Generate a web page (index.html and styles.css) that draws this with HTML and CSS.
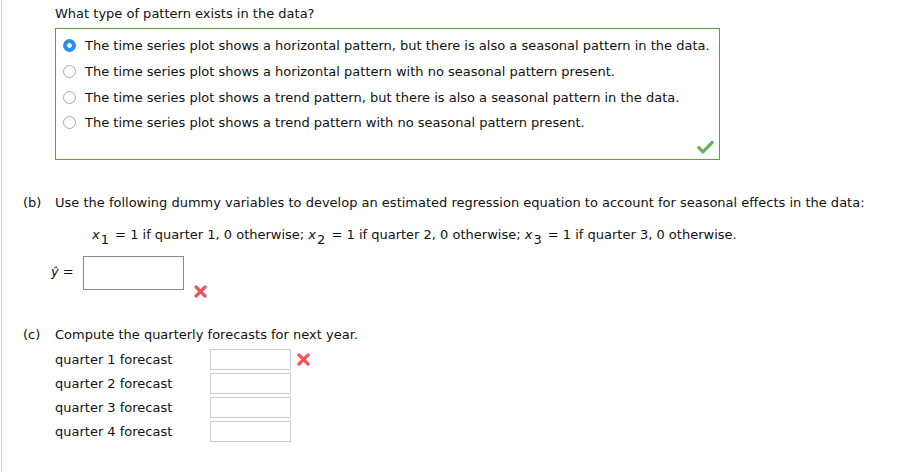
FILE: index.html
```html
<!DOCTYPE html>
<html>
<head>
<meta charset="utf-8">
<link rel="stylesheet" href="styles.css">
</head>
<body>
<div class="page">
  <div class="question">What type of pattern exists in the data?</div>
  <div class="choices">
    <div class="choice"><span class="radio on"></span><span>The time series plot shows a horizontal pattern, but there is also a seasonal pattern in the data.</span></div>
    <div class="choice"><span class="radio"></span><span>The time series plot shows a horizontal pattern with no seasonal pattern present.</span></div>
    <div class="choice"><span class="radio"></span><span>The time series plot shows a trend pattern, but there is also a seasonal pattern in the data.</span></div>
    <div class="choice"><span class="radio"></span><span>The time series plot shows a trend pattern with no seasonal pattern present.</span></div>
    <svg class="check" width="17" height="14" viewBox="0 0 17 14"><path d="M1.8 7.6 L6 11.8 L15.2 2.4" fill="none" stroke="#5cb35c" stroke-width="3.2" stroke-linecap="round" stroke-linejoin="round"/></svg>
  </div>

  <div class="part part-b">
    <span class="label">(b)</span>
    <span>Use the following dummy variables to develop an estimated regression equation to account for seasonal effects in the data:</span>
  </div>
  <div class="dummy"><i>x</i><sub>1</sub> = 1 if quarter 1, 0 otherwise; <i>x</i><sub>2</sub> = 1 if quarter 2, 0 otherwise; <i>x</i><sub>3</sub> = 1 if quarter 3, 0 otherwise.</div>
  <div class="yhat-row">
    <span class="yhat"><i>ŷ</i> =</span>
    <span class="big-input"></span>
    <svg class="cross cross-b" width="13" height="13" viewBox="0 0 13 13"><path d="M2 2 L11 11 M11 2 L2 11" stroke="#f0545e" stroke-width="3.2" stroke-linecap="round"/></svg>
  </div>

  <div class="part part-c">
    <span class="label">(c)</span>
    <span>Compute the quarterly forecasts for next year.</span>
  </div>
  <div class="forecasts">
    <div class="frow"><span class="flabel">quarter 1 forecast</span><span class="small-input"></span><svg class="cross" width="13" height="13" viewBox="0 0 13 13"><path d="M2 2 L11 11 M11 2 L2 11" stroke="#f0545e" stroke-width="3.2" stroke-linecap="round"/></svg></div>
    <div class="frow"><span class="flabel">quarter 2 forecast</span><span class="small-input"></span></div>
    <div class="frow"><span class="flabel">quarter 3 forecast</span><span class="small-input"></span></div>
    <div class="frow"><span class="flabel">quarter 4 forecast</span><span class="small-input"></span></div>
  </div>
</div>
</body>
</html>
```

FILE: styles.css
```css
html, body {
  margin: 0;
  padding: 0;
  background: #fff;
}
body {
  font-family: "DejaVu Sans", Verdana, sans-serif;
  font-size: 13px;
  color: #111;
}
.page {
  margin-left: 1px;
  border-left: 1px solid #d4d4d4;
  min-height: 472px;
  box-sizing: border-box;
  padding-left: 53px;
  padding-top: 6px;
}
.question {
  line-height: 16px;
}
.choices {
  position: relative;
  margin-top: 6px;
  width: 665px;
  height: 132px;
  border: 1px solid #5fa043;
  padding-top: 4px;
  box-sizing: border-box;
}
.choice {
  display: flex;
  align-items: center;
  height: 25.7px;
}
.radio {
  width: 13px;
  height: 13px;
  border: 1px solid #a8a8a8;
  border-radius: 50%;
  margin-left: 7px;
  margin-right: 9px;
  box-sizing: border-box;
  background: #fff;
  flex: none;
}
.radio.on {
  border: none;
  background: radial-gradient(circle, #fff 0 2px, #2d8fe8 2.6px);
}
.check {
  position: absolute;
  right: 5px;
  bottom: 5px;
}
.part {
  display: flex;
  margin-left: -32px;
  line-height: 16px;
}
.part .label {
  width: 32px;
  flex: none;
}
.part-b {
  margin-top: 35px;
}
.dummy {
  margin-top: 16px;
  margin-left: 37px;
  line-height: 16px;
}
.dummy sub {
  font-size: 13px;
  vertical-align: -5px;
  line-height: 0;
  padding-left: 1px;
  padding-right: 2px;
}
.yhat-row {
  display: flex;
  align-items: flex-start;
  margin-top: 13px;
  margin-left: -4px;
}
.yhat {
  margin-top: 8px;
  width: 32px;
}
.big-input {
  width: 101px;
  height: 34px;
  border: 1px solid #8a8a8a;
  box-sizing: border-box;
}
.cross-b {
  margin-left: 10px;
  margin-top: 29px;
}
.part-c {
  margin-top: 29px;
}
.forecasts {
  margin-top: 4px;
}
.frow {
  display: flex;
  align-items: center;
  height: 24px;
}
.flabel {
  width: 155px;
}
.small-input {
  width: 81px;
  height: 21px;
  border: 1px solid #cbcbcb;
  box-sizing: border-box;
}
.frow .cross {
  margin-left: 6px;
}
```
